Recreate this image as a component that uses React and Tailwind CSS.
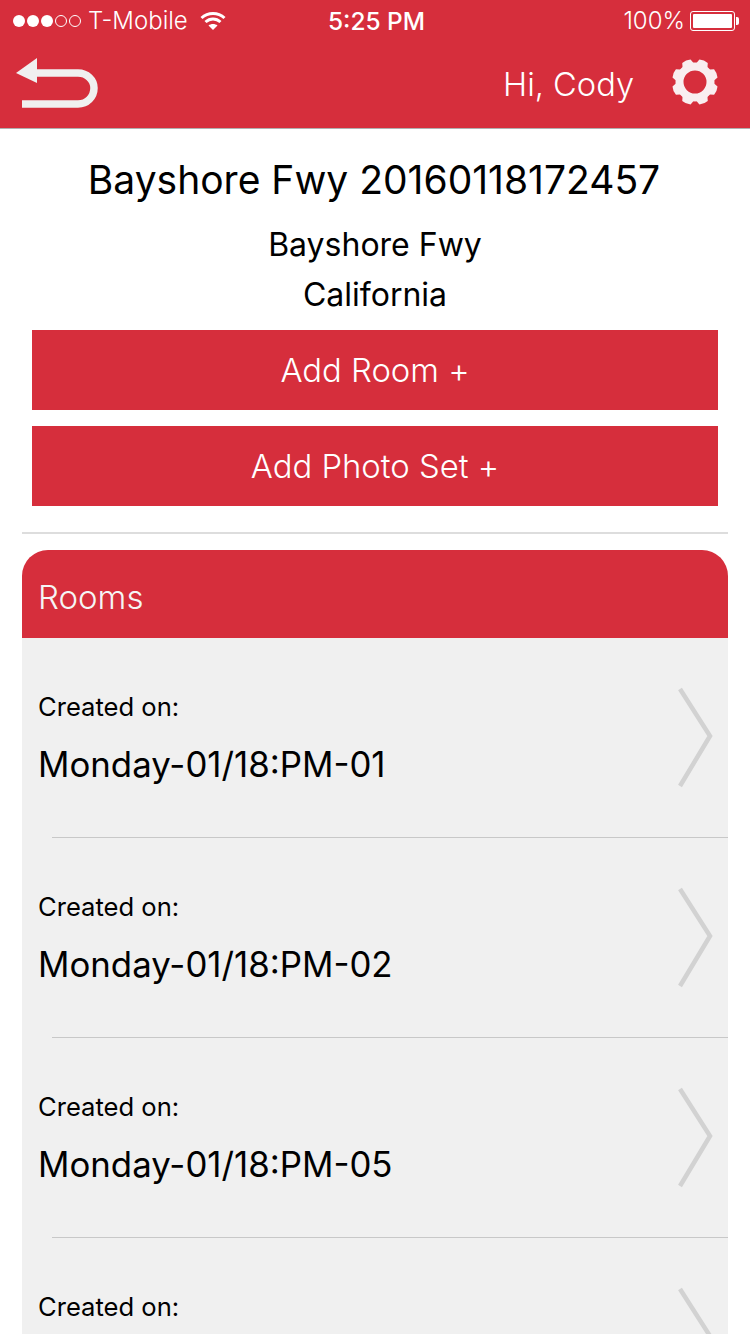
const font = { fontFamily: '"Inter", "Liberation Sans", sans-serif' };

function Gear() {
  const teeth = [];
  for (let i = 0; i < 8; i++) {
    teeth.push(
      <path key={i} d="M17 9 L19.5 1.5 Q24 0 28.5 1.5 L31 9 Z" fill="#f9eef0" transform={`rotate(${i * 45 + 22.5} 24 24)`} />
    );
  }
  return (
    <svg width="48" height="48" viewBox="0 0 48 48">
      {teeth}
      <circle cx="24" cy="24" r="15.5" fill="none" stroke="#f9eef0" strokeWidth="8" />
    </svg>
  );
}

function Row({ label, last }) {
  return (
    <div className="relative h-[200px] shrink-0 bg-[#f0f0f0] pl-[16px] pt-[54px]">
      <div className="text-[25.6px] leading-[30px] text-black">Created on:</div>
      <div className="mt-[21px] text-[34.8px] leading-[42px] text-black">{label}</div>
      <svg className="absolute left-[656px] top-[49px]" width="36" height="102" viewBox="0 0 36 102" fill="none">
        <path d="M2 2 L32 49 L2 99" stroke="#d2d2d2" strokeWidth="4.5" strokeLinecap="butt" strokeLinejoin="miter" />
      </svg>
      {!last && <div className="absolute bottom-[0px] left-[30px] right-0 h-px bg-[#c8c8c8]" />}
    </div>
  );
}

export default function App() {
  return (
    <div className="flex h-[1334px] w-[750px] flex-col overflow-hidden bg-white" style={font}>
      <div className="h-[129px] shrink-0 border-b border-[#b0b0b0] bg-[#d62e3c] text-white">
        <div className="relative flex h-[42px] items-center justify-between pl-[13px] pr-[11px] text-[24px]">
          <div className="flex items-center">
            <div className="flex items-center gap-[2px]">
              <span className="h-[12px] w-[12px] rounded-full bg-white" />
              <span className="h-[12px] w-[12px] rounded-full bg-white" />
              <span className="h-[12px] w-[12px] rounded-full bg-white" />
              <span className="h-[12px] w-[12px] rounded-full border border-white" />
              <span className="h-[12px] w-[12px] rounded-full border border-white" />
            </div>
            <span className="ml-[7px] font-light">T-Mobile</span>
            <svg className="ml-[12px]" width="26" height="20" viewBox="0 0 26 20" fill="none" stroke="#fff" strokeWidth="3">
              <path d="M1.5 7 C8 1 18 1 24.5 7" />
              <path d="M5.5 11 C10 7 16 7 20.5 11" />
              <path d="M13 19 L8.5 14.5 C11 12.5 15 12.5 17.5 14.5 Z" fill="#fff" stroke="none" />
            </svg>
          </div>
          <span className="absolute left-[328px] text-[24.4px] font-medium">5:25 PM</span>
          <div className="flex items-center">
            <span className="font-light">100%</span>
            <div className="ml-[5px] h-[20px] w-[45px] rounded-[3px] border border-white p-[2px]">
              <div className="h-full w-full rounded-[1px] bg-white" />
            </div>
            <div className="ml-[1px] h-[8px] w-[3px] rounded-r-[2px] bg-white" />
          </div>
        </div>
        <div className="flex h-[86px] items-center justify-between pl-[16px] pr-[31px]">
          <svg width="82" height="50" viewBox="0 0 82 50" fill="none" className="mt-[-4px]">
            <path d="M0 15 L21 0 V25 Z" fill="#f0f0f0" />
            <path d="M19 15 H62 C71 15 78 22 78 30 C78 39 71 46 62 46 H6" stroke="#f0f0f0" strokeWidth="7.5" />
          </svg>
          <div className="flex items-center">
            <span className="mt-[-2px] text-[32.6px] font-light">Hi, Cody</span>
            <div className="ml-[37px] mt-[-6px]"><Gear /></div>
          </div>
        </div>
      </div>

      <div className="flex shrink-0 flex-col items-center pt-[26px]">
        <h1 className="pr-[2px] text-[39px] leading-[50px] font-normal text-black">Bayshore Fwy 20160118172457</h1>
        <div className="mt-[15px] text-[32px] leading-[50px] text-black">Bayshore Fwy</div>
        <div className="text-[32px] leading-[50px] text-black">California</div>
      </div>

      <div className="mt-[10px] flex shrink-0 flex-col gap-[16px] px-[32px]">
        <button className="h-[80px] bg-[#d62e3c] pt-[2px] text-[32.8px] font-light text-white">Add Room +</button>
        <button className="h-[80px] bg-[#d62e3c] pt-[2px] text-[32.8px] font-light text-white">Add Photo Set +</button>
      </div>

      <div className="mx-[22px] mt-[26px] h-[2px] shrink-0 bg-[#dddddd]" />

      <div className="mx-[22px] mt-[16px] flex flex-col">
        <div className="flex h-[88px] shrink-0 items-center rounded-t-[26px] bg-[#d62e3c] pl-[16px] pt-[8px] text-[33px] font-light text-[#f5f5f5]">Rooms</div>
        <Row label="Monday-01/18:PM-01" />
        <Row label="Monday-01/18:PM-02" />
        <Row label="Monday-01/18:PM-05" />
        <Row label="Monday-01/18:PM-06" last />
      </div>
    </div>
  );
}
